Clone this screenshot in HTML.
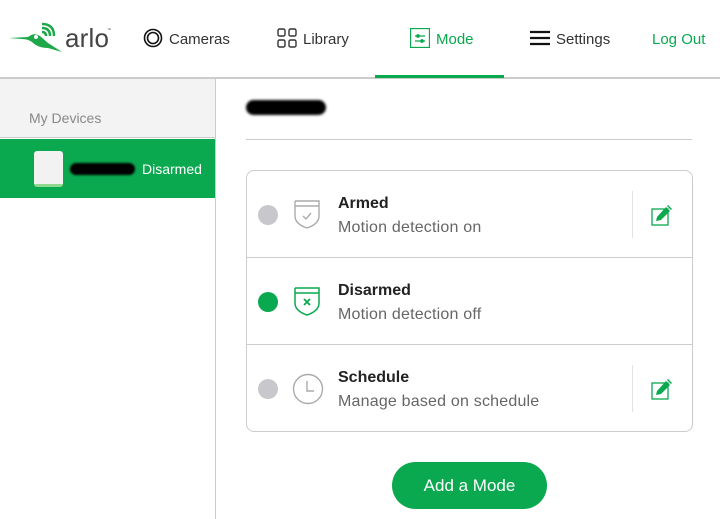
<!DOCTYPE html>
<html><head><style>
*{margin:0;padding:0;box-sizing:border-box}
body{width:720px;height:519px;background:#fff;font-family:"Liberation Sans",sans-serif;position:relative;overflow:hidden;color:#333}
.a{position:absolute}
.nav{font-size:15px;color:#333;top:31px}
.row{position:absolute;left:0;width:446px;height:87px;border-bottom:1px solid #ccc}
.dot{position:absolute;left:11px;width:20px;height:20px;border-radius:50%;top:34px;background:#c8c8cc}
.t1{position:absolute;left:91px;top:24px;font-size:16px;color:#222;font-weight:bold}
.t2{position:absolute;left:91px;top:48px;font-size:16px;color:#666;letter-spacing:0.2px}
.sep{position:absolute;left:385px;top:20px;width:1px;height:47px;background:#e2e2e2}
</style></head><body>
<svg class="a" style="left:8px;top:22px" width="104" height="32" viewBox="0 0 104 32">
<path d="M1 16 L20 15 Q26 10 32 14 L40 21 L54 30 L40 26 Q30 26 24 20 Q20 17 14 17 Z" fill="#1ea84a"/>
<circle cx="28" cy="15" r="2" fill="#fff"/>
<path d="M34 10 Q38 10 38 14 M34 6 Q42 6 42 14 M34 2 Q46 2 46 14" stroke="#1ea84a" stroke-width="2.5" fill="none"/>
<text x="57" y="25" font-family="Liberation Sans" font-size="26" fill="#444" textLength="44">arlo</text>
<text x="99" y="9" font-size="4" fill="#444">™</text>
</svg>
<svg class="a" style="left:143px;top:28px" width="20" height="20"><circle cx="10" cy="10" r="8.5" stroke="#111" stroke-width="1.6" fill="none"/><circle cx="10" cy="10" r="5.5" stroke="#111" stroke-width="1.6" fill="none"/></svg>
<div class="a nav" style="left:169px">Cameras</div>
<svg class="a" style="left:277px;top:28px" width="20" height="20" fill="none" stroke="#333" stroke-width="1.4"><rect x="1" y="1" width="7" height="7" rx="1.5"/><rect x="12" y="1" width="7" height="7" rx="1.5"/><rect x="1" y="12" width="7" height="7" rx="1.5"/><rect x="12" y="12" width="7" height="7" rx="1.5"/></svg>
<div class="a nav" style="left:303px">Library</div>
<svg class="a" style="left:410px;top:28px" width="20" height="20" fill="none" stroke="#0aa84f" stroke-width="1.3"><rect x="0.5" y="0.5" width="19" height="19"/><path d="M5 8H15M5 13H15"/><circle cx="8" cy="8" r="1.2" fill="#0aa84f"/><circle cx="12" cy="13" r="1.2" fill="#0aa84f"/></svg>
<div class="a nav" style="left:436px;color:#0aa84f">Mode</div>
<svg class="a" style="left:530px;top:30px" width="20" height="16"><path d="M0 2H20M0 8H20M0 14H20" stroke="#111" stroke-width="2.2"/></svg>
<div class="a nav" style="left:556px">Settings</div>
<div class="a nav" style="left:652px;color:#0aa84f">Log Out</div>
<div class="a" style="left:0;top:77px;width:720px;height:2px;background:#ccc"></div>
<div class="a" style="left:375px;top:75px;width:129px;height:3px;background:#0aa84f"></div>
<div class="a" style="left:0;top:79px;width:215px;height:59px;background:#f3f3f3;border-bottom:1px solid #ccc"></div>
<div class="a" style="left:29px;top:110px;font-size:14px;color:#888">My Devices</div>
<div class="a" style="left:0;top:139px;width:215px;height:59px;background:#0aa84f"></div>
<div class="a" style="left:34px;top:151px;width:29px;height:36px;background:#f2f2f2;border-radius:3px;border-bottom:3px solid #8fd88f"></div>
<div class="a" style="left:70px;top:163px;width:65px;height:12px;background:#000;border-radius:6px;filter:blur(1px)"></div>
<div class="a" style="left:142px;top:161px;font-size:14px;color:#fff">Disarmed</div>
<div class="a" style="left:215px;top:79px;width:1px;height:440px;background:#ccc"></div>
<div class="a" style="left:246px;top:100px;width:80px;height:15px;background:#000;border-radius:8px;filter:blur(1.2px)"></div>
<div class="a" style="left:246px;top:139px;width:446px;height:1px;background:#ccc"></div>
<div class="a" style="left:246px;top:170px;width:447px;height:262px;border:1px solid #ccc;border-radius:8px;overflow:hidden">
 <div class="row" style="top:0">
  <div class="dot"></div>
  <svg class="a" style="left:47px;top:29px" width="26" height="30" fill="none" stroke="#aaa" stroke-width="1.4"><path d="M1 1H25V6H1M1 1V16Q1 24 13 28Q25 24 25 16V1"/><path d="M9 16L12 19L17 13"/></svg>
  <div class="t1">Armed</div><div class="t2">Motion detection on</div>
  <div class="sep"></div>
  <svg class="a" style="left:404px;top:33px" width="22" height="22"><rect x="1" y="5" width="16" height="16" fill="none" stroke="#0aa84f" stroke-width="1.3"/><path d="M5 17L6 13L15 3L19 7L10 16Z" fill="#0aa84f"/><path d="M16 2L17 1L21 5L20 6Z" fill="#0aa84f"/></svg>
 </div>
 <div class="row" style="top:87px">
  <div class="dot" style="background:#0aa84f"></div>
  <svg class="a" style="left:47px;top:29px" width="26" height="30" fill="none" stroke="#0aa84f" stroke-width="1.5"><path d="M1 1H25V6H1M1 1V16Q1 24 13 28Q25 24 25 16V1"/><path d="M10 12L16 18M16 12L10 18" stroke-width="1.8"/></svg>
  <div class="t1">Disarmed</div><div class="t2">Motion detection off</div>
 </div>
 <div class="row" style="top:174px;border-bottom:none">
  <div class="dot"></div>
  <svg class="a" style="left:45px;top:28px" width="32" height="32" fill="none" stroke="#aaa" stroke-width="1.4"><circle cx="16" cy="16" r="14.5"/><path d="M15 8V18H22"/></svg>
  <div class="t1">Schedule</div><div class="t2">Manage based on schedule</div>
  <div class="sep"></div>
  <svg class="a" style="left:404px;top:33px" width="22" height="22"><rect x="1" y="5" width="16" height="16" fill="none" stroke="#0aa84f" stroke-width="1.3"/><path d="M5 17L6 13L15 3L19 7L10 16Z" fill="#0aa84f"/><path d="M16 2L17 1L21 5L20 6Z" fill="#0aa84f"/></svg>
 </div>
</div>
<div class="a" style="left:392px;top:462px;width:155px;height:47px;border-radius:24px;background:#0aa84f;color:#fff;font-size:17px;text-align:center;line-height:47px">Add a Mode</div>
</body></html>
